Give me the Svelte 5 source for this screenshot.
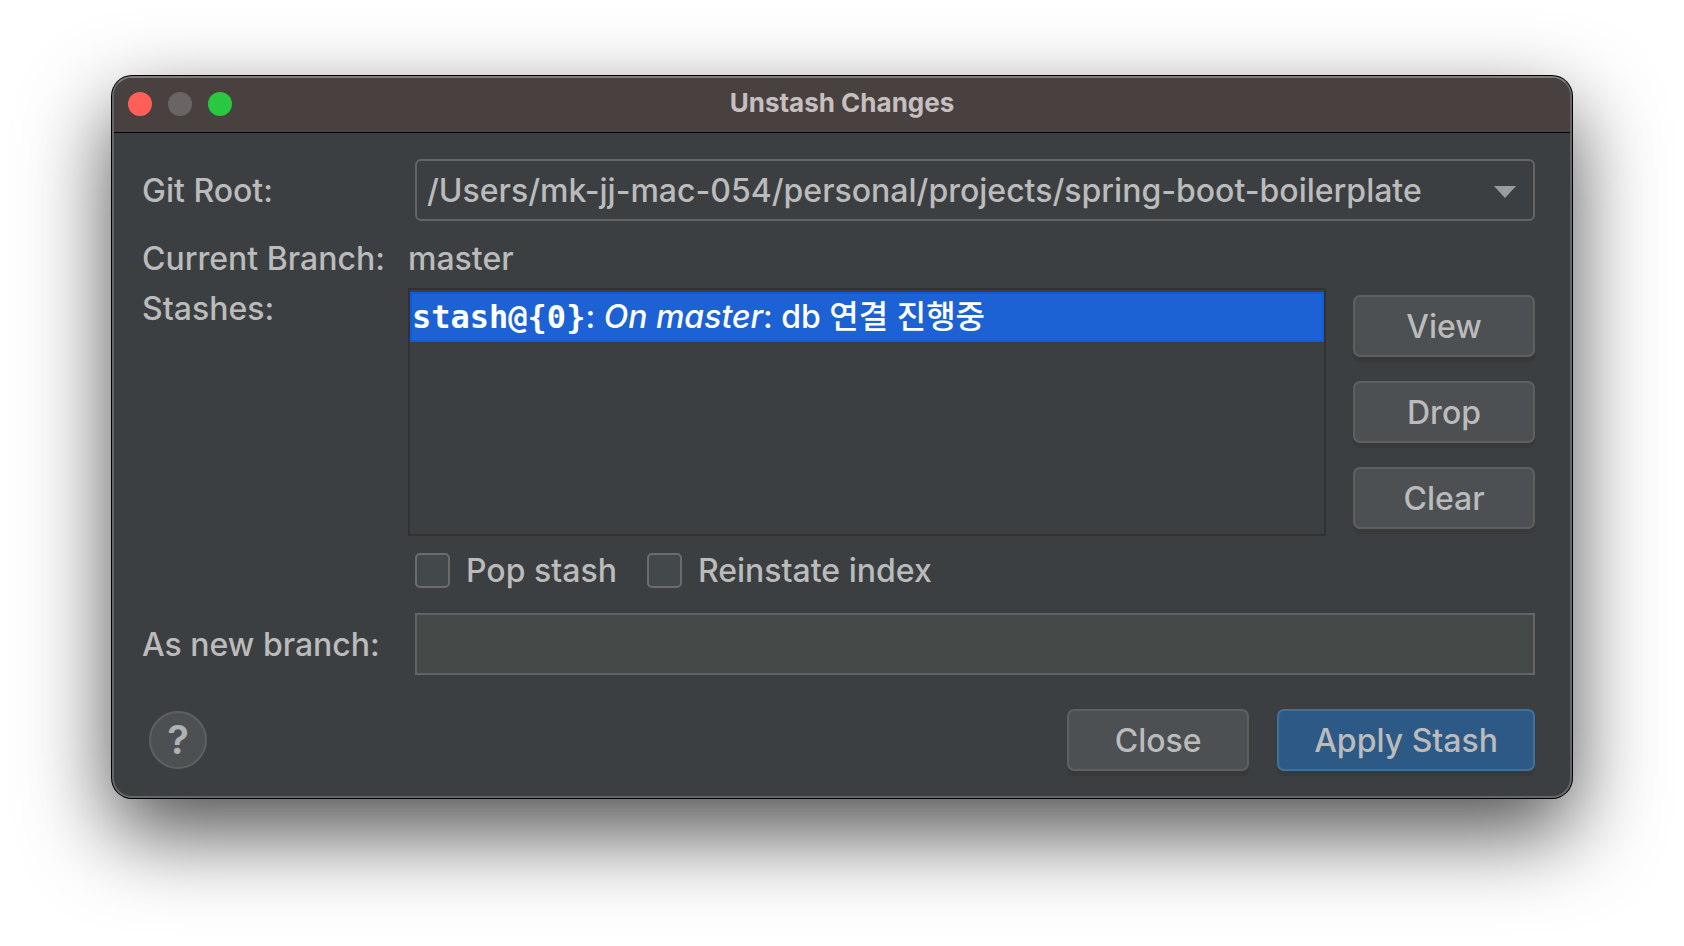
<script>
    const roots = ['/Users/mk-jj-mac-054/personal/projects/spring-boot-boilerplate'];
    const branch = 'master';

    let root = roots[0];
    let stashes = [{ name: 'stash@{0}', branch: 'On master', message: 'db 연결 진행중' }];
    let selected = 0;
    let popStash = false;
    let reinstateIndex = false;
    let newBranch = '';

    const dropStash = () => {
        stashes = stashes.filter((stash, i) => i !== selected);
        selected = 0;
    };

    const clearStashes = () => {
        stashes = [];
    };
</script>

<div class="desktop">
    <div class="window">
        <header class="titlebar">
            <div class="lights">
                <button class="light red" aria-label="Close window"></button>
                <button class="light grey" aria-label="Minimize window" disabled></button>
                <button class="light green" aria-label="Zoom window"></button>
            </div>
            <h1>Unstash Changes</h1>
        </header>

        <form class="content" on:submit|preventDefault>
            <div class="row">
                <label for="git-root">Git Root:</label>
                <div class="select-wrap field">
                    <select id="git-root" bind:value={root}>
                        {#each roots as path}
                            <option value={path}>{path}</option>
                        {/each}
                    </select>
                    <svg class="arrow" width="22" height="12" viewBox="0 0 22 12" aria-hidden="true">
                        <path d="M0 0h22L11 12z" fill="#9a9da0" />
                    </svg>
                </div>
            </div>

            <div class="row branch-row">
                <span>Current Branch:</span>
                <span>{branch}</span>
            </div>

            <div class="row stash-row">
                <span id="stashes-label">Stashes:</span>
                <div class="stashes">
                    <ul role="listbox" aria-labelledby="stashes-label">
                        {#each stashes as stash, i}
                            <li role="option" aria-selected={i === selected} class:selected={i === selected}>
                                <button type="button" on:click={() => (selected = i)}><b>{stash.name}</b>: <i>{stash.branch}</i>: {stash.message}</button>
                            </li>
                        {/each}
                    </ul>
                    <div class="actions">
                        <button type="button" class="btn">View</button>
                        <button type="button" class="btn" on:click={dropStash}>Drop</button>
                        <button type="button" class="btn" on:click={clearStashes}>Clear</button>
                    </div>
                </div>
            </div>

            <div class="row check-row">
                <div class="checks field">
                    <label><input type="checkbox" bind:checked={popStash} />Pop stash</label>
                    <label><input type="checkbox" bind:checked={reinstateIndex} />Reinstate index</label>
                </div>
            </div>

            <div class="row">
                <label for="new-branch">As new branch:</label>
                <input id="new-branch" class="field" type="text" bind:value={newBranch} />
            </div>

            <footer>
                <button type="button" class="help" aria-label="Help">?</button>
                <button type="button" class="btn">Close</button>
                <button type="submit" class="btn primary">Apply Stash</button>
            </footer>
        </form>
    </div>
</div>

<style>
    :global(body) {
        background: white;
    }
    .desktop {
        box-sizing: border-box;
        min-height: 100vh;
        padding: 76px 112px;
        overflow: hidden;
    }
    .window {
        border: 2px solid #646668;
        border-top-color: #807d79;
        border-radius: 20px;
        background: #3c3f41;
        box-shadow: 0 0 0 1px black, 0 34px 86px rgba(0, 0, 0, 0.7);
        color: #bbbbbb;
        font-family: Inter, "Noto Sans CJK KR", sans-serif;
        font-size: 32px;
        font-weight: 500;
        line-height: 40px;
    }
    button, select, input {
        box-sizing: border-box;
        margin: 0;
        color: inherit;
        font: inherit;
    }

    .titlebar {
        display: grid;
        grid-template-columns: 1fr auto 1fr;
        align-items: center;
        height: 54px;
        padding: 0 14px;
        border-bottom: 1px solid black;
        border-radius: 18px 18px 0 0;
        background: #494140;
    }
    .lights {
        display: flex;
        gap: 16px;
        padding-bottom: 2px;
    }
    .light {
        width: 24px;
        height: 24px;
        padding: 0;
        border: none;
        border-radius: 50%;
    }
    .red {
        background: #ff5f57;
    }
    .grey {
        background: #6b6464;
    }
    .green {
        background: #28c840;
    }
    h1 {
        margin: 0;
        padding-bottom: 4px;
        color: #c6bfbf;
        font-size: 26px;
        line-height: 32px;
        font-weight: 700;
    }

    .content {
        padding: 26px 35px 25px 28px;
    }
    .row {
        display: grid;
        grid-template-columns: 266px 1fr;
        align-items: center;
    }
    .row > label {
        padding-top: 2px;
    }
    .field {
        margin-left: 7px;
    }
    .select-wrap {
        display: grid;
        align-items: center;
    }
    select {
        grid-area: 1 / 1;
        width: 100%;
        height: 62px;
        padding: 2px 60px 0 10px;
        border: 2px solid #646464;
        border-radius: 6px;
        background: #3c3f41;
        appearance: none;
    }
    .arrow {
        grid-area: 1 / 1;
        justify-self: end;
        margin: 4px 19px 0 0;
        pointer-events: none;
    }
    .branch-row {
        margin: 18px 0 9px;
    }
    .stash-row {
        align-items: start;
        line-height: 42px;
    }
    .stashes {
        display: flex;
        gap: 27px;
    }
    ul {
        flex: 1;
        box-sizing: border-box;
        margin: 0;
        padding: 2px 0 0;
        border: 2px solid #323232;
        list-style: none;
    }
    li button {
        display: block;
        width: 100%;
        height: 50px;
        padding: 0;
        border: 2px solid transparent;
        background: none;
        text-align: left;
        white-space: pre;
    }
    .selected button {
        border-color: #0f5bdc;
        background: #1d62d4;
        color: white;
    }
    b {
        font-family: "DejaVu Sans Mono", monospace;
    }
    .actions {
        display: flex;
        flex-direction: column;
        gap: 24px;
        padding: 7px 0;
    }
    .btn {
        min-width: 182px;
        height: 62px;
        padding: 2px 35px 0;
        border: 2px solid #5e6060;
        border-radius: 7px;
        background: #4c5052;
        box-shadow: 0 5px 1px #37393a;
    }
    .primary {
        border-color: #41719a;
        background: #2d5986;
    }
    .check-row {
        grid-template-columns: 1fr;
        margin: 17px 0 25px;
        padding-left: 266px;
    }
    .checks {
        display: flex;
        gap: 30px;
        line-height: 35px;
    }
    .checks label {
        display: flex;
        align-items: center;
        gap: 16px;
    }
    .checks input {
        width: 35px;
        height: 35px;
        border: 2px solid #6b6b6b;
        border-radius: 5px;
        background: #43494a;
        appearance: none;
    }
    .checks input:checked {
        background: #2d5986;
    }
    #new-branch {
        height: 62px;
        padding: 0 10px;
        border: 2px solid #646464;
        background: #454a49;
    }

    footer {
        display: flex;
        align-items: center;
        gap: 28px;
        margin-top: 34px;
    }
    .help {
        width: 58px;
        height: 58px;
        margin: 0 auto 0 7px;
        padding: 0;
        border: 2px solid #5e6060;
        border-radius: 50%;
        background: #4c5052;
        color: #afb1b3;
        font-size: 40px;
        font-weight: 600;
    }
</style>
